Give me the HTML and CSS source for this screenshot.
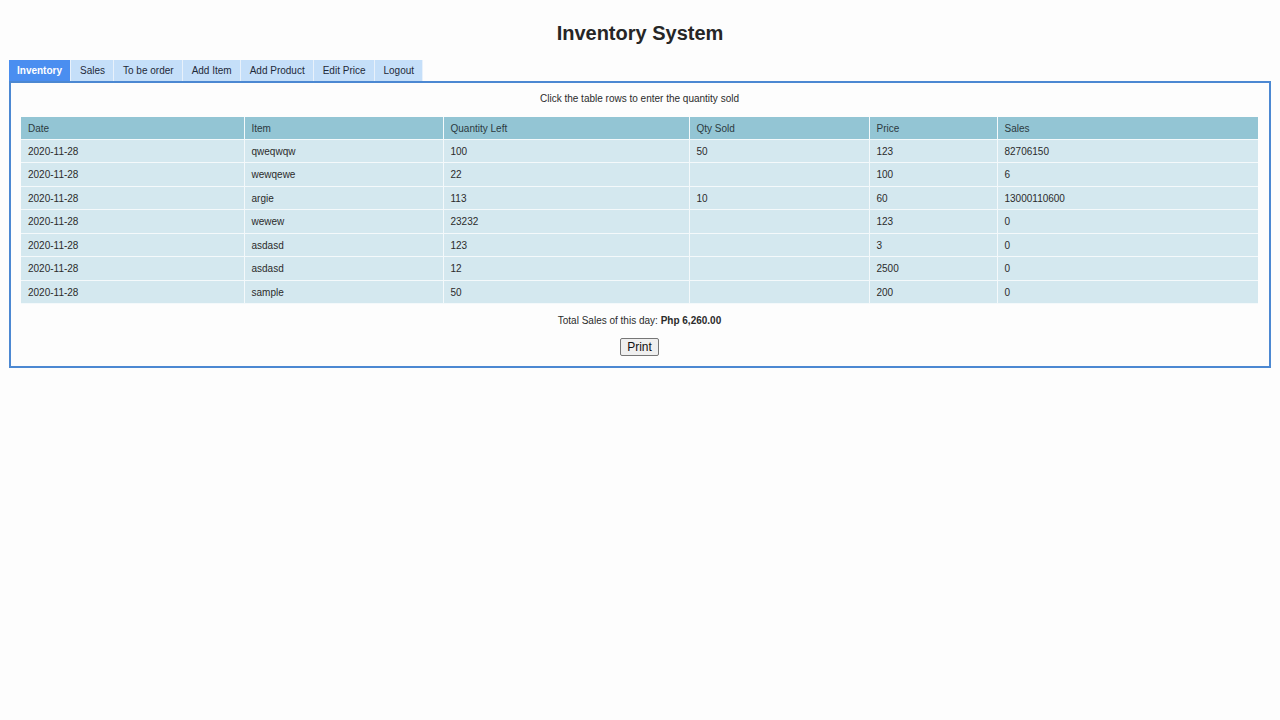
FILE: index.html
```html
<!DOCTYPE html>
<html>
<head>
<meta charset="utf-8">
<title>Inventory System</title>
<link rel="stylesheet" href="styles.css">
</head>
<body>
<h1 class="title">Inventory System</h1>
<nav class="tabs">
  <a class="tab active">Inventory</a>
  <a class="tab">Sales</a>
  <a class="tab">To be order</a>
  <a class="tab">Add Item</a>
  <a class="tab">Add Product</a>
  <a class="tab">Edit Price</a>
  <a class="tab">Logout</a>
</nav>
<div class="panel">
  <p class="hint">Click the table rows to enter the quantity sold</p>
  <table class="grid">
    <colgroup>
      <col class="c1"><col class="c2"><col class="c3"><col class="c4"><col class="c5"><col class="c6">
    </colgroup>
    <thead>
      <tr><th>Date</th><th>Item</th><th>Quantity Left</th><th>Qty Sold</th><th>Price</th><th>Sales</th></tr>
    </thead>
    <tbody>
      <tr><td>2020-11-28</td><td>qweqwqw</td><td>100</td><td>50</td><td>123</td><td>82706150</td></tr>
      <tr><td>2020-11-28</td><td>wewqewe</td><td>22</td><td></td><td>100</td><td>6</td></tr>
      <tr><td>2020-11-28</td><td>argie</td><td>113</td><td>10</td><td>60</td><td>13000110600</td></tr>
      <tr><td>2020-11-28</td><td>wewew</td><td>23232</td><td></td><td>123</td><td>0</td></tr>
      <tr><td>2020-11-28</td><td>asdasd</td><td>123</td><td></td><td>3</td><td>0</td></tr>
      <tr><td>2020-11-28</td><td>asdasd</td><td>12</td><td></td><td>2500</td><td>0</td></tr>
      <tr><td>2020-11-28</td><td>sample</td><td>50</td><td></td><td>200</td><td>0</td></tr>
    </tbody>
  </table>
  <p class="total">Total Sales of this day: <b>Php 6,260.00</b></p>
  <div class="actions"><button class="print">Print</button></div>
</div>
</body>
</html>
```
FILE: styles.css
```css
html, body {
  background: #fdfdfd;
}
body {
  margin: 0;
  padding: 0 9px;
  font-family: "Liberation Sans", Arial, sans-serif;
  font-size: 10px;
  color: #2b2b2b;
}
.title {
  margin: 0;
  padding-top: 21px;
  height: 60px;
  box-sizing: border-box;
  text-align: center;
  font-size: 20px;
  line-height: 24px;
  font-weight: bold;
  color: #262626;
}
.tabs {
  display: flex;
  height: 21px;
}
.tab {
  display: block;
  padding: 0 8px 0 9px;
  line-height: 21px;
  background: #c5dff9;
  color: #1e2a3a;
  border-right: 1px solid #e8f1fb;
}
.tab.active {
  background: #4a8ef0;
  color: #ffffff;
  font-weight: bold;
  padding: 0 8px;
}
.panel {
  border: 2px solid #4c88d2;
  padding: 0 11px 0 10px;
  height: 283px;
}
.hint {
  margin: 0;
  height: 34px;
  line-height: 31px;
  text-align: center;
}
.grid {
  width: 100%;
  border-collapse: collapse;
  table-layout: fixed;
}
.c1 { width: 223px; }
.c2 { width: 199px; }
.c3 { width: 246px; }
.c4 { width: 180px; }
.c5 { width: 128px; }
.c6 { width: auto; }
.grid th, .grid td {
  text-align: left;
  font-weight: normal;
  padding: 1px 7px 0;
  border: 1px solid #f4f9fb;
  height: 22px;
  box-sizing: border-box;
}
.grid thead tr { height: 22px; }
.grid tbody tr { height: 23.5px; }
.grid th {
  background: #93c5d4;
  color: #2c3a40;
}
.grid td {
  background: #d4e8ef;
}
.grid tr > :first-child { border-left: none; }
.grid tr > :last-child { border-right: none; }
.grid thead th { border-top: none; }
.total {
  margin: 0;
  height: 34px;
  line-height: 34px;
  text-align: center;
}
.total b { font-weight: bold; }
.actions {
  text-align: center;
}
.print {
  font-family: "Liberation Sans", Arial, sans-serif;
  font-size: 12px;
  padding: 0 6px;
  height: 18px;
  background: #efefef;
  border: 1px solid #767676;
  border-radius: 2px;
  color: #111;
}
```
